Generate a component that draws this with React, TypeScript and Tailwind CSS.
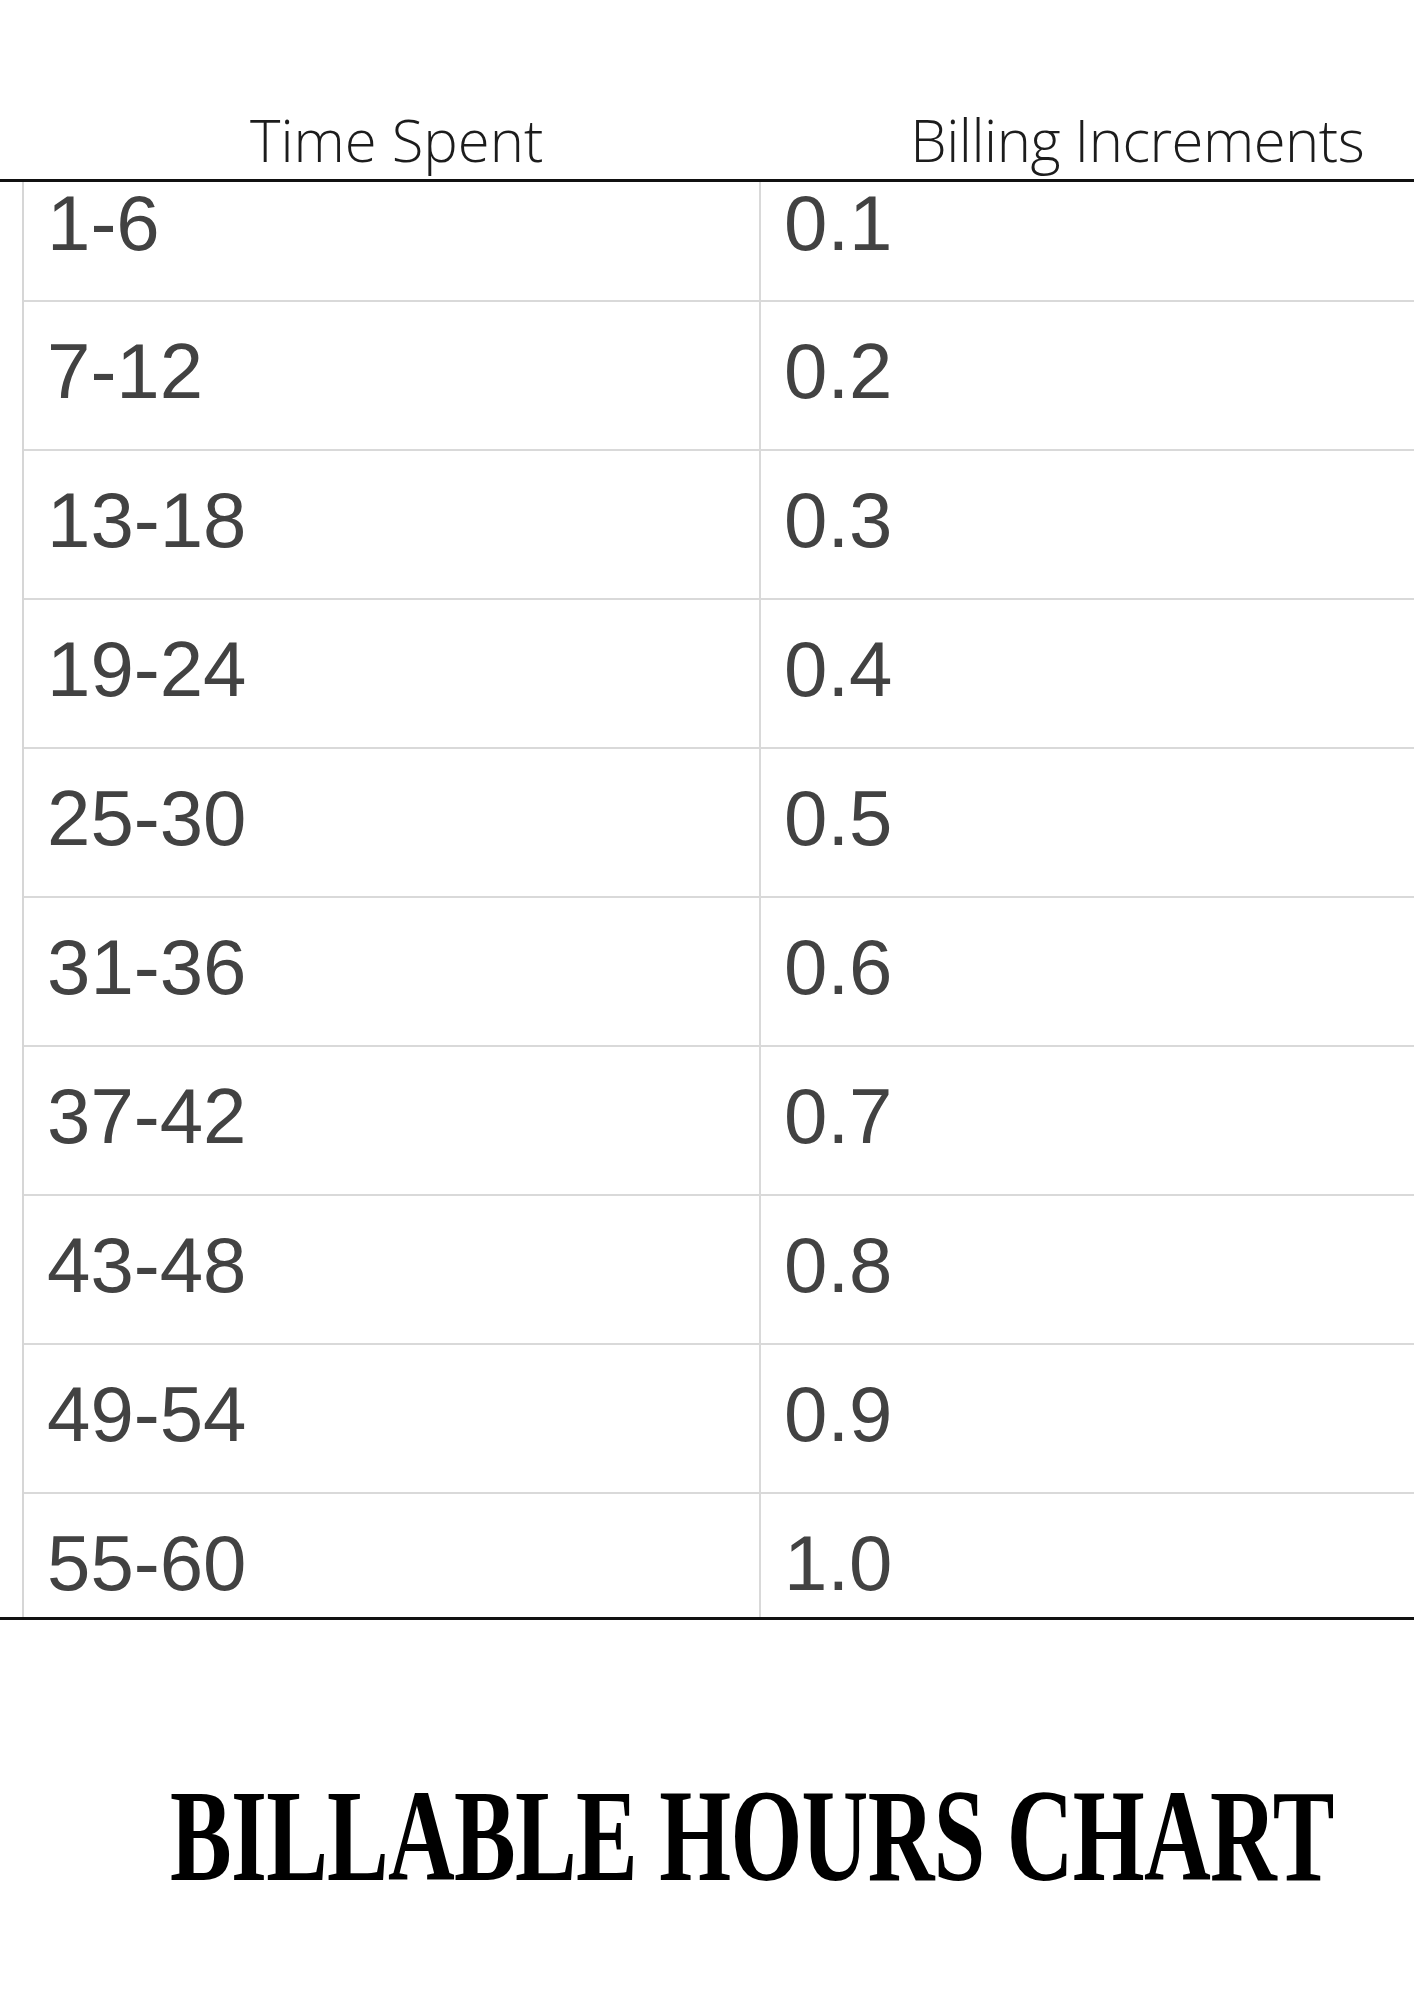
export default function App() {
  const rows = [
    ['1-6', '0.1'],
    ['7-12', '0.2'],
    ['13-18', '0.3'],
    ['19-24', '0.4'],
    ['25-30', '0.5'],
    ['31-36', '0.6'],
    ['37-42', '0.7'],
    ['43-48', '0.8'],
    ['49-54', '0.9'],
    ['55-60', '1.0'],
  ];
  const last = rows.length - 1;

  return (
    <div className="w-[1414px] h-[2000px] bg-white overflow-hidden">
      {/* Header labels */}
      <div className="h-[179px] flex items-end font-['Open_Sans',sans-serif] font-light text-[58px] leading-none text-[#1c1c1c]">
        <span className="ml-[250px] mb-[10px] relative z-10">Time Spent</span>
        <span className="ml-[367px] mb-[10px] relative z-10 tracking-[-0.5px]">Billing Increments</span>
      </div>

      {/* Table: first and last rows are cut by the thick rules */}
      <div className="border-y-[3px] border-[#111] h-[1441px]">
        <div className="ml-[22px] border-l-2 border-[#d6d6d6] h-full flex flex-col font-['Liberation_Sans',Arial,sans-serif] text-[78px] leading-none text-[#424242]">
          {rows.map((r, i) => {
            const rowCls =
              i === 0
                ? 'h-[120px] border-b-2 items-start pt-[2px]'
                : i === last
                  ? 'items-start pt-[30px]'
                  : 'h-[149px] border-b-2 items-center pb-[10px]';
            return (
              <div key={i} className={i === last ? 'grid grid-cols-[737px_1fr] flex-1' : 'grid grid-cols-[737px_1fr]'}>
                <div className={`flex pl-[23px] border-r-2 border-[#d9d9d9] ${rowCls}`}>{r[0]}</div>
                <div className={`flex pl-[23px] border-[#d9d9d9] ${rowCls}`}>{r[1]}</div>
              </div>
            );
          })}
        </div>
      </div>

      {/* Title */}
      <div className="mt-[150px] pl-[170px]">
        <h1 className="inline-block origin-left scale-x-[0.7] font-['Liberation_Serif',serif] font-bold text-[132px] leading-none text-black whitespace-nowrap tracking-[-1px]">
          BILLABLE HOURS CHART
        </h1>
      </div>
    </div>
  );
}
